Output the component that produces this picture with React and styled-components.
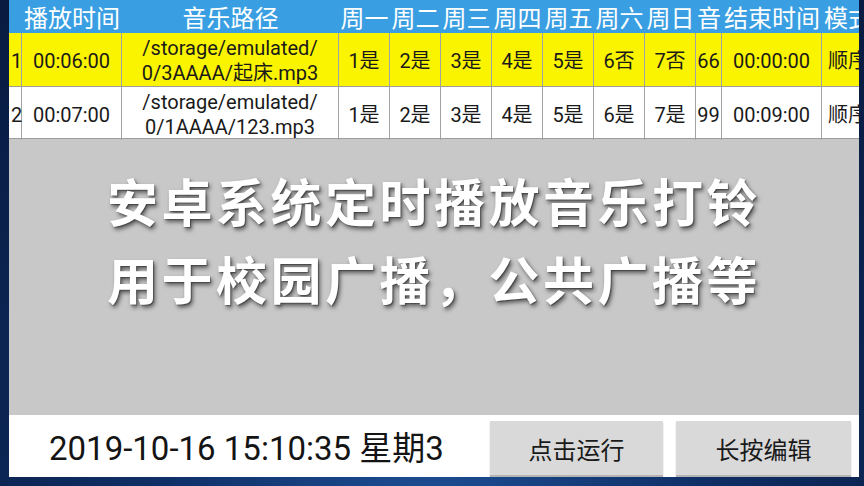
import React from "react";
import styled, { createGlobalStyle } from "styled-components";

const Global = createGlobalStyle`
  html, body { margin: 0; padding: 0; }
  body {
    width: 864px;
    height: 486px;
    overflow: hidden;
    background: radial-gradient(ellipse at 50% 110%, #1d4f95 0%, #0f2f66 45%, #081a3f 100%);
    font-family: Roboto, "Noto Sans CJK SC", sans-serif;
  }
`;

const Screen = styled.div`
  margin-left: 9px;
  width: 850px;
  height: 477px;
  display: flex;
  flex-direction: column;
  overflow: hidden;
  background: #c8c8c8;
`;

const COLS = "13px 100px 217px repeat(7, 51px) 26px 100px 52px";

const HeaderRow = styled.div`
  display: grid;
  grid-template-columns: ${COLS};
  height: 33px;
  background: #3a9fe2;
  color: #ffffff;
  font-family: "Noto Sans CJK SC", sans-serif;
  font-size: 24px;
  white-space: nowrap;
`;

const HeadCell = styled.div`
  display: flex;
  align-items: center;
  justify-content: center;
  overflow: visible;
  line-height: 33px;
`;

const DataRow = styled.div`
  display: grid;
  grid-template-columns: ${COLS};
  height: ${(p) => p.$h}px;
  background: ${(p) => (p.$hl ? "#fbf400" : "#ffffff")};
  color: #1a1a1a;
  font-size: 20px;
  border-bottom: 1px solid #9c9c9c;
  box-sizing: border-box;
`;

const Cell = styled.div`
  display: flex;
  flex-direction: column;
  align-items: ${(p) => (p.$left ? "flex-start" : "center")};
  justify-content: center;
  border-right: 1px solid #a2a2a2;
  box-sizing: border-box;
  white-space: nowrap;
  overflow: visible;
  line-height: 25px;
  padding-top: 3px;
  padding-left: ${(p) => (p.$left ? "2px" : "0")};
  &:last-child { border-right: none; }
`;

const Canvas = styled.div`
  flex: 1;
  display: flex;
  flex-direction: column;
  align-items: center;
  padding-top: 22px;
  box-sizing: border-box;
`;

const Caption = styled.div`
  font-family: "Noto Sans CJK SC", sans-serif;
  font-weight: 700;
  font-size: 51px;
  letter-spacing: 3.5px;
  line-height: 78px;
  color: #ffffff;
  text-shadow: 2px 3px 4px rgba(0, 0, 0, 0.55), 1px 1px 1px rgba(0, 0, 0, 0.35);
  white-space: nowrap;
`;

const BottomBar = styled.div`
  height: 62px;
  background: #ffffff;
  display: flex;
  align-items: center;
  padding: 0 8px 0 40px;
  gap: 13px;
  box-sizing: border-box;
`;

const Clock = styled.div`
  flex: 1;
  font-family: Roboto, "Noto Sans CJK SC", sans-serif;
  font-size: 33px;
  color: #141414;
  white-space: nowrap;
`;

const Button = styled.div`
  width: ${(p) => p.$w}px;
  height: 54px;
  margin-top: 4px;
  background: #d9d9d9;
  box-shadow: 0 2px 1px #b4b4b4;
  display: flex;
  align-items: center;
  justify-content: center;
  font-family: "Noto Sans CJK SC", sans-serif;
  font-size: 24px;
  color: #1a1a1a;
`;

const headers = [
  "",
  "播放时间",
  "音乐路径",
  "周一",
  "周二",
  "周三",
  "周四",
  "周五",
  "周六",
  "周日",
  "音",
  "结束时间",
  "模式",
];

const rows = [
  {
    n: "1",
    hl: true,
    h: 54,
    time: "00:06:00",
    path: ["/storage/emulated/", "0/3AAAA/起床.mp3"],
    days: ["1是", "2是", "3是", "4是", "5是", "6否", "7否"],
    vol: "66",
    end: "00:00:00",
    mode: "顺序",
  },
  {
    n: "2",
    hl: false,
    h: 52,
    time: "00:07:00",
    path: ["/storage/emulated/", "0/1AAAA/123.mp3"],
    days: ["1是", "2是", "3是", "4是", "5是", "6是", "7是"],
    vol: "99",
    end: "00:09:00",
    mode: "顺序",
  },
];

export default function App() {
  return (
    <>
      <Global />
      <Screen>
        <HeaderRow>
          {headers.map((t, i) => (
            <HeadCell key={i}>{t}</HeadCell>
          ))}
        </HeaderRow>
        {rows.map((r) => (
          <DataRow key={r.n} $hl={r.hl} $h={r.h}>
            <Cell $left>{r.n}</Cell>
            <Cell>{r.time}</Cell>
            <Cell>
              <span>{r.path[0]}</span>
              <span>{r.path[1]}</span>
            </Cell>
            {r.days.map((d) => (
              <Cell key={d}>{d}</Cell>
            ))}
            <Cell>{r.vol}</Cell>
            <Cell>{r.end}</Cell>
            <Cell>{r.mode}</Cell>
          </DataRow>
        ))}
        <Canvas>
          <Caption>安卓系统定时播放音乐打铃</Caption>
          <Caption>用于校园广播，公共广播等</Caption>
        </Canvas>
        <BottomBar>
          <Clock>2019-10-16 15:10:35 星期3</Clock>
          <Button $w={173}>点击运行</Button>
          <Button $w={175}>长按编辑</Button>
        </BottomBar>
      </Screen>
    </>
  );
}
